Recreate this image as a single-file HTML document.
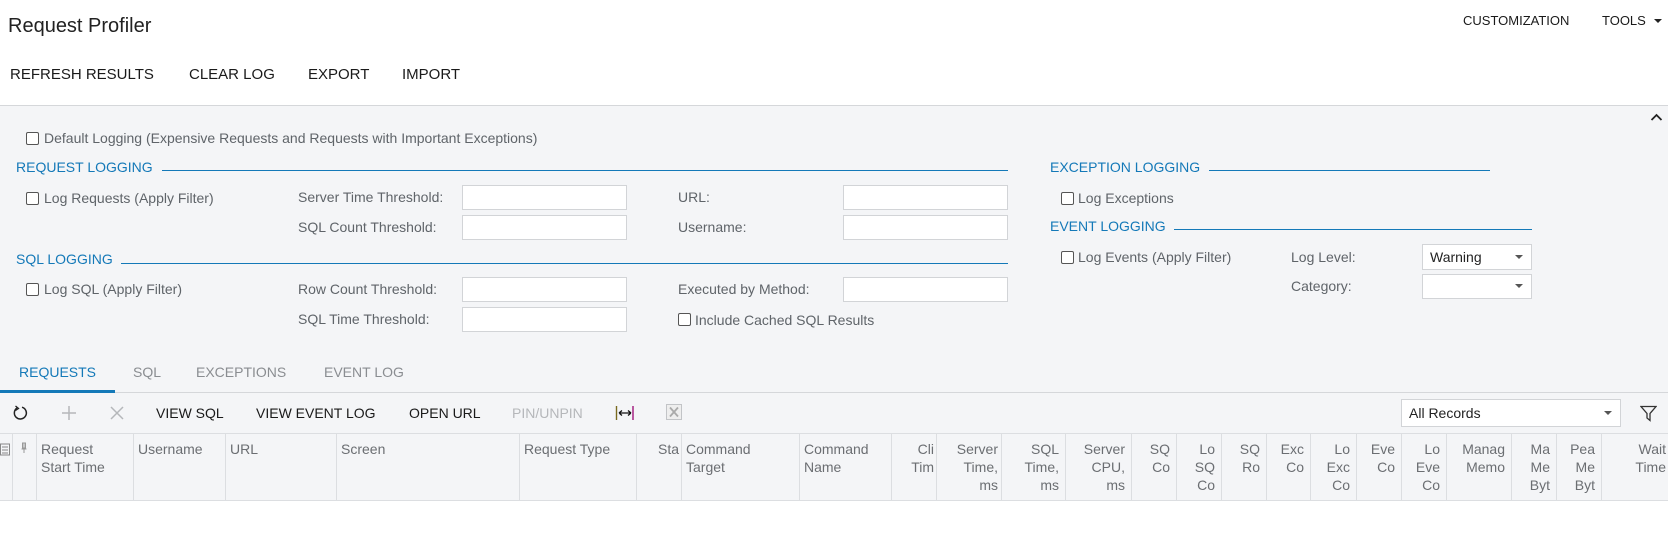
<!DOCTYPE html>
<html><head><meta charset="utf-8">
<style>
*{margin:0;padding:0;box-sizing:border-box}
body{width:1668px;height:543px;position:relative;overflow:hidden;background:#fff;font-family:"Liberation Sans",Arial,sans-serif;color:#222}
.a{position:absolute;white-space:nowrap}
.t{font-size:15px;color:#1a1a1a;line-height:18px}
.lab{font-size:14px;color:#5f6469;line-height:16px}
.sec{font-size:14px;color:#1479b8;line-height:16px}
.ln{position:absolute;height:1px;background:#1479b8}
.cb{position:absolute;width:13px;height:13px;border:1px solid #555;border-radius:2px;background:#fff}
.in{position:absolute;height:25px;background:#fff;border:1px solid #d2d4d7}
.hd{position:absolute;top:433px;height:67px;border-right:1px solid #dcdee1;font-size:14px;line-height:18px;color:#6b6e72;padding-top:7px;overflow:hidden;white-space:nowrap}
.l{padding-left:4px}
.r{text-align:right;padding-right:6px}
.dd{position:absolute;width:0;height:0;border-left:4px solid transparent;border-right:4px solid transparent;border-top:4px solid #555}
</style></head><body>
<div class="a" style="left:8px;top:14px;font-size:20px;color:#222;line-height:24px">Request Profiler</div>
<div class="a t" style="left:1463px;top:12px;font-size:13px">CUSTOMIZATION</div>
<div class="a t" style="left:1602px;top:12px;font-size:13px">TOOLS</div>
<div class="dd" style="left:1654px;top:19px;border-top-color:#222"></div>
<div class="a t" style="left:10px;top:66px">REFRESH RESULTS</div>
<div class="a t" style="left:189px;top:66px">CLEAR LOG</div>
<div class="a t" style="left:308px;top:66px">EXPORT</div>
<div class="a t" style="left:402px;top:66px">IMPORT</div>

<div style="position:absolute;left:0;top:105px;width:1668px;height:396px;background:#f4f5f7;border-top:1px solid #d5d7da"></div>
<svg class="a" style="left:1650px;top:113px" width="13" height="9"><path d="M1.5 7 L6.5 2 L11.5 7" fill="none" stroke="#222" stroke-width="1.8"/></svg>

<div class="cb" style="left:26px;top:132px"></div>
<div class="a lab" style="left:44px;top:130px">Default Logging (Expensive Requests and Requests with Important Exceptions)</div>

<div class="a sec" style="left:16px;top:159px">REQUEST LOGGING</div>
<div class="ln" style="left:162px;top:170px;width:846px"></div>
<div class="cb" style="left:26px;top:192px"></div>
<div class="a lab" style="left:44px;top:190px">Log Requests (Apply Filter)</div>
<div class="a lab" style="left:298px;top:189px">Server Time Threshold:</div>
<div class="in" style="left:462px;top:185px;width:165px"></div>
<div class="a lab" style="left:298px;top:219px">SQL Count Threshold:</div>
<div class="in" style="left:462px;top:215px;width:165px"></div>
<div class="a lab" style="left:678px;top:189px">URL:</div>
<div class="in" style="left:843px;top:185px;width:165px"></div>
<div class="a lab" style="left:678px;top:219px">Username:</div>
<div class="in" style="left:843px;top:215px;width:165px"></div>

<div class="a sec" style="left:16px;top:251px">SQL LOGGING</div>
<div class="ln" style="left:121px;top:263px;width:887px"></div>
<div class="cb" style="left:26px;top:283px"></div>
<div class="a lab" style="left:44px;top:281px">Log SQL (Apply Filter)</div>
<div class="a lab" style="left:298px;top:281px">Row Count Threshold:</div>
<div class="in" style="left:462px;top:277px;width:165px"></div>
<div class="a lab" style="left:298px;top:311px">SQL Time Threshold:</div>
<div class="in" style="left:462px;top:307px;width:165px"></div>
<div class="a lab" style="left:678px;top:281px">Executed by Method:</div>
<div class="in" style="left:843px;top:277px;width:165px"></div>
<div class="cb" style="left:678px;top:313px"></div>
<div class="a lab" style="left:695px;top:312px">Include Cached SQL Results</div>

<div class="a sec" style="left:1050px;top:159px">EXCEPTION LOGGING</div>
<div class="ln" style="left:1209px;top:170px;width:281px"></div>
<div class="cb" style="left:1061px;top:192px"></div>
<div class="a lab" style="left:1078px;top:190px">Log Exceptions</div>
<div class="a sec" style="left:1050px;top:218px">EVENT LOGGING</div>
<div class="ln" style="left:1174px;top:229px;width:358px"></div>
<div class="cb" style="left:1061px;top:251px"></div>
<div class="a lab" style="left:1078px;top:249px">Log Events (Apply Filter)</div>
<div class="a lab" style="left:1291px;top:249px">Log Level:</div>
<div class="in" style="left:1422px;top:244px;width:110px;height:26px"></div>
<div class="a" style="left:1430px;top:249px;font-size:14px;color:#222">Warning</div>
<div class="dd" style="left:1515px;top:255px"></div>
<div class="a lab" style="left:1291px;top:278px">Category:</div>
<div class="in" style="left:1422px;top:274px;width:110px"></div>
<div class="dd" style="left:1515px;top:284px"></div>

<div class="a" style="left:19px;top:364px;font-size:14px;color:#1479b8">REQUESTS</div>
<div class="a" style="left:133px;top:364px;font-size:14px;color:#8a8d91">SQL</div>
<div class="a" style="left:196px;top:364px;font-size:14px;color:#8a8d91">EXCEPTIONS</div>
<div class="a" style="left:324px;top:364px;font-size:14px;color:#8a8d91">EVENT LOG</div>
<div style="position:absolute;left:0;top:392px;width:1668px;height:1px;background:#d5d7da"></div>
<div style="position:absolute;left:0;top:390px;width:115px;height:3px;background:#1479b8"></div>

<svg class="a" style="left:12px;top:404px" width="17" height="18"><path d="M10 3.2 A6 6 0 1 1 5 4" fill="none" stroke="#222" stroke-width="1.5"/><path d="M3.5 2 L6.5 4.5 L3.5 6.5" fill="none" stroke="#222" stroke-width="1.3"/></svg>
<svg class="a" style="left:61px;top:405px" width="16" height="16"><path d="M8 1V15M1 8H15" stroke="#b5b7ba" stroke-width="1.5"/></svg>
<svg class="a" style="left:110px;top:406px" width="14" height="14"><path d="M1 1L13 13M13 1L1 13" stroke="#b5b7ba" stroke-width="1.5"/></svg>
<div class="a" style="left:156px;top:405px;font-size:14px;color:#1a1a1a">VIEW SQL</div>
<div class="a" style="left:256px;top:405px;font-size:14px;color:#1a1a1a">VIEW EVENT LOG</div>
<div class="a" style="left:409px;top:405px;font-size:14px;color:#1a1a1a">OPEN URL</div>
<div class="a" style="left:512px;top:405px;font-size:14px;color:#b5b7ba">PIN/UNPIN</div>
<svg class="a" style="left:615px;top:404px" width="20" height="18"><path d="M1.5 2V16" stroke="#7a6a20" stroke-width="1.4"/><path d="M18 2V16" stroke="#a0147a" stroke-width="1.4"/><path d="M4 9H16M4 9L7 6.5M4 9L7 11.5M16 9L13 6.5M16 9L13 11.5" stroke="#111" stroke-width="1.3" fill="none"/></svg>
<svg class="a" style="left:666px;top:404px" width="16" height="16"><rect x="0.5" y="0.5" width="15" height="15" fill="#eee" stroke="#c2c4c7"/><path d="M4 3.5L12 12.5M12 3.5L4 12.5" stroke="#aaa" stroke-width="1.8"/></svg>

<div class="in" style="left:1401px;top:399px;width:220px;height:28px"></div>
<div class="a" style="left:1409px;top:405px;font-size:14px;color:#222">All Records</div>
<div class="dd" style="left:1604px;top:411px"></div>
<svg class="a" style="left:1640px;top:405px" width="17" height="17"><path d="M1 1.5H16L10 8.5V15.5L7 13V8.5Z" fill="none" stroke="#333" stroke-width="1.3"/></svg>

<div style="position:absolute;left:0;top:433px;width:1668px;height:1px;background:#dcdee1"></div>
<div style="position:absolute;left:0;top:500px;width:1668px;height:1px;background:#dcdee1"></div>
<div class="hd" style="left:0;width:13px"><svg width="10" height="14" style="margin-top:2px"><rect x="0.5" y="2" width="9" height="11" fill="none" stroke="#888"/><path d="M2 5H8M2 8H8M2 11H8" stroke="#888"/></svg></div>
<div class="hd" style="left:13px;width:24px;padding-left:7px"><svg width="8" height="12"><path d="M4 1V11M1.5 7H6.5M2.5 1H5.5V6H2.5Z" fill="none" stroke="#999"/></svg></div>
<div class="hd l" style="left:37px;width:97px">Request<br>Start Time</div>
<div class="hd l" style="left:134px;width:92px">Username</div>
<div class="hd l" style="left:226px;width:111px">URL</div>
<div class="hd l" style="left:337px;width:183px">Screen</div>
<div class="hd l" style="left:520px;width:117px">Request Type</div>
<div class="hd r" style="left:637px;width:45px;padding-right:2px">Sta</div>
<div class="hd l" style="left:682px;width:118px">Command<br>Target</div>
<div class="hd l" style="left:800px;width:92px">Command<br>Name</div>
<div class="hd r" style="left:892px;width:45px;padding-right:2px">Cli<br>Tim</div>
<div class="hd r" style="left:937px;width:65px;padding-right:3px">Server<br>Time,<br>ms</div>
<div class="hd r" style="left:1002px;width:64px">SQL<br>Time,<br>ms</div>
<div class="hd r" style="left:1066px;width:66px">Server<br>CPU,<br>ms</div>
<div class="hd r" style="left:1132px;width:45px">SQ<br>Co</div>
<div class="hd r" style="left:1177px;width:45px">Lo<br>SQ<br>Co</div>
<div class="hd r" style="left:1222px;width:45px">SQ<br>Ro</div>
<div class="hd r" style="left:1267px;width:44px">Exc<br>Co</div>
<div class="hd r" style="left:1311px;width:46px">Lo<br>Exc<br>Co</div>
<div class="hd r" style="left:1357px;width:45px">Eve<br>Co</div>
<div class="hd r" style="left:1402px;width:45px">Lo<br>Eve<br>Co</div>
<div class="hd r" style="left:1447px;width:65px">Manag<br>Memo</div>
<div class="hd r" style="left:1512px;width:45px">Ma<br>Me<br>Byt</div>
<div class="hd r" style="left:1557px;width:45px">Pea<br>Me<br>Byt</div>
<div class="hd r" style="left:1602px;width:66px;border-right:none;padding-right:2px">Wait<br>Time</div>
</body></html>
